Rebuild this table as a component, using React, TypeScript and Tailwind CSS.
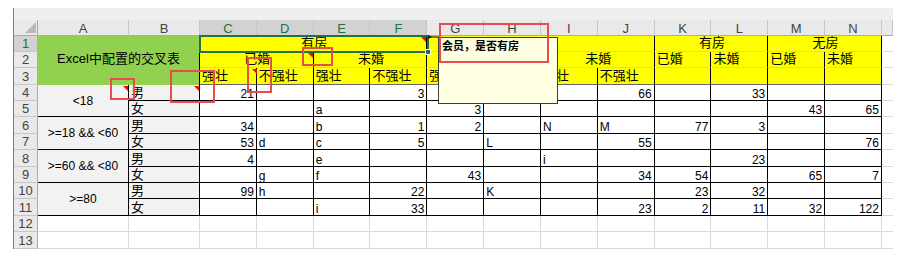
import * as React from 'react'

const letters = ['A', 'B', 'C', 'D', 'E', 'F', 'G', 'H', 'I', 'J', 'K', 'L', 'M', 'N']

// data for columns C..N, rows 4..11
const rows: string[][] = [
  ['21', '', '', '3', '', '', '', '66', '', '33', '', ''],
  ['', '', 'a', '', '3', '', '', '', '', '', '43', '65'],
  ['34', '', 'b', '1', '2', '', 'N', 'M', '77', '3', '', ''],
  ['53', 'd', 'c', '5', '', 'L', '', '55', '', '', '', '76'],
  ['4', '', 'e', '', '', '', 'i', '', '', '23', '', ''],
  ['', 'g', 'f', '', '43', '', '', '34', '54', '', '65', '7'],
  ['99', 'h', '', '22', '', 'K', '', '', '23', '32', '', ''],
  ['', '', 'i', '33', '', '', '', '23', '2', '11', '32', '122'],
]

const ages = ['<18', '>=18 && <60', '>=60 && <80', '>=80']

function ColHead({ label, selected }: { label: string; selected?: boolean }) {
  return (
    <div
      className={`flex items-center justify-center border-r border-b border-r-[#c6c6c6] border-b-[#ababab] pt-[2px] text-[13px] leading-[13px] ${
        selected ? 'bg-[#d2d2d2] text-[#217346]' : 'bg-[#e9e9e9] text-[#444]'
      }`}
    >
      {label}
    </div>
  )
}

function RowHead({ n, selected }: { n: number; selected?: boolean }) {
  return (
    <div
      className={`flex items-end justify-center border-r border-b border-r-[#ababab] border-b-[#c6c6c6] text-[13px] leading-[14px] ${
        selected ? 'bg-[#d2d2d2] text-[#217346]' : 'bg-[#e9e9e9] text-[#444]'
      }`}
    >
      {n}
    </div>
  )
}

function Yellow({
  children,
  span,
  center,
  last,
}: {
  children?: React.ReactNode
  span?: 2 | 4
  center?: boolean
  last?: boolean
}) {
  return (
    <div
      className={`flex items-end overflow-hidden whitespace-nowrap border-r border-b border-r-black bg-[#ffff00] pb-[1px] pl-[2px] text-[13px] leading-[14px] text-black ${
        last ? 'border-b-[#666]' : 'border-b-[#d4d4b4]'
      } ${center ? 'justify-center' : 'justify-start'} ${
        span === 4 ? 'col-span-4' : span === 2 ? 'col-span-2' : ''
      }`}
    >
      {children}
    </div>
  )
}

function Data({ v }: { v: string }) {
  const isNum = /^\d+$/.test(v)
  return (
    <div
      className={`flex items-end whitespace-nowrap border-r border-b border-black px-[2px] text-[12px] leading-[11px] text-black ${
        isNum ? 'justify-end' : 'justify-start'
      }`}
    >
      {v}
    </div>
  )
}

export default function App() {
  return (
    <div className="relative h-[258px] w-[898px] overflow-hidden bg-white font-['Liberation_Sans','Noto_Sans_CJK_SC',sans-serif]">
      <div className="ml-[13px] mt-[8px] flex h-[241px] w-[880px] flex-col border-l border-[#4a9d6a]">
        {/* top band */}
        <div className="h-[12px] bg-[#efefef]" />

        {/* sheet */}
        <div className="grid grid-cols-[24px_91px_71px_repeat(12,56.833px)_11px] grid-rows-[15.5px_repeat(13,16.4px)]">
          {/* column headers */}
          <div className="border-r border-b border-r-[#ababab] border-b-[#ababab] bg-[#e9e9e9]">
            <svg width="24" height="15" viewBox="0 0 24 15">
              <polygon points="22,2 22,13 11,13" fill="#b9b9b9" />
            </svg>
          </div>
          {letters.map((l, i) => (
            <ColHead key={l} label={l} selected={i >= 2 && i <= 5} />
          ))}
          <ColHead label="" />

          {/* row 1 */}
          <RowHead n={1} selected />
          <div className="col-span-2 row-span-3 flex items-center justify-center border-r border-black bg-[#92d050] pb-[2px] text-[13px] leading-[14px] text-black">
            Excel中配置的交叉表
          </div>
          <Yellow span={4} center>有房</Yellow>
          <Yellow span={4} center>无房</Yellow>
          <Yellow span={2} center>有房</Yellow>
          <Yellow span={2} center>无房</Yellow>
          <div className="border-b border-[#dadada]" />

          {/* row 2 */}
          <RowHead n={2} />
          <Yellow span={2} center>已婚</Yellow>
          <Yellow span={2} center>未婚</Yellow>
          <Yellow span={2} center>已婚</Yellow>
          <Yellow span={2} center>未婚</Yellow>
          <Yellow>已婚</Yellow>
          <Yellow>未婚</Yellow>
          <Yellow>已婚</Yellow>
          <Yellow>未婚</Yellow>
          <div className="border-b border-[#dadada]" />

          {/* row 3 */}
          <RowHead n={3} />
          <Yellow last>强壮</Yellow>
          <Yellow last>不强壮</Yellow>
          <Yellow last>强壮</Yellow>
          <Yellow last>不强壮</Yellow>
          <Yellow last>强壮</Yellow>
          <Yellow last>不强壮</Yellow>
          <Yellow last>强壮</Yellow>
          <Yellow last>不强壮</Yellow>
          <Yellow last />
          <Yellow last />
          <Yellow last />
          <Yellow last />
          <div className="border-b border-[#dadada]" />

          {/* rows 4..11 */}
          {rows.map((r, i) => (
            <React.Fragment key={i}>
              <RowHead n={i + 4} />
              {i % 2 === 0 && (
                <div className="row-span-2 flex items-center justify-center whitespace-nowrap border-r border-b border-black bg-[#f2f2f2] text-[12px] leading-[14px] text-black">
                  {ages[i / 2]}
                </div>
              )}
              <div className="flex items-end border-r border-b border-black bg-[#f2f2f2] pl-[2px] text-[13px] leading-[14px] text-black">
                {i % 2 === 0 ? '男' : '女'}
              </div>
              {r.map((v, j) => (
                <Data key={j} v={v} />
              ))}
              <div className="border-b border-[#dadada]" />
            </React.Fragment>
          ))}

          {/* rows 12, 13 */}
          {[12, 13].map((n) => (
            <React.Fragment key={n}>
              <RowHead n={n} />
              {letters.map((l) => (
                <div key={l} className="border-r border-b border-[#dadada]" />
              ))}
              <div className="border-b border-[#dadada]" />
            </React.Fragment>
          ))}
        </div>
      </div>

      {/* selection C1:F1 */}
      <div className="absolute left-[199px] top-[35px] h-[18px] w-[230px] border-2 border-[#217346]" />
      <div className="absolute left-[425px] top-[49px] h-[6px] w-[6px] border border-white bg-[#217346]" />

      {/* comment indicators */}
      <div className="absolute left-[421px] top-[37px] h-0 w-0 border-l-[5px] border-t-[5px] border-l-transparent border-t-[#ff0000]" />
      <div className="absolute left-[308px] top-[53px] h-0 w-0 border-l-[5px] border-t-[5px] border-l-transparent border-t-[#ff0000]" />
      <div className="absolute left-[252px] top-[69px] h-0 w-0 border-l-[5px] border-t-[5px] border-l-transparent border-t-[#ff0000]" />
      <div className="absolute left-[123px] top-[86px] h-0 w-0 border-l-[5px] border-t-[5px] border-l-transparent border-t-[#ff0000]" />
      <div className="absolute left-[194px] top-[86px] h-0 w-0 border-l-[5px] border-t-[5px] border-l-transparent border-t-[#ff0000]" />

      {/* comment connector + box */}
      <svg className="absolute left-[427px] top-[33px]" width="12" height="8" viewBox="0 0 12 8">
        <polygon points="1,2 5,4 1,6" fill="#000" />
        <line x1="4" y1="4" x2="12" y2="4" stroke="#000" strokeWidth="1" />
      </svg>
      <div className="absolute left-[438px] top-[37px] h-[67px] w-[120px] border border-[#3c3c3c] bg-[#ffffe1] px-[3px] pt-[2px] text-[11px] font-bold leading-[13px] text-black">
        会员，是否有房
      </div>

      {/* red annotation boxes */}
      <div className="absolute left-[110px] top-[78px] h-[22px] w-[25px] border-2 border-[#e84c4c]" />
      <div className="absolute left-[170px] top-[70px] h-[33px] w-[45px] border-2 border-[#e84c4c]" />
      <div className="absolute left-[247px] top-[57px] h-[36px] w-[25px] border-2 border-[#e84c4c]" />
      <div className="absolute left-[302px] top-[47px] h-[19px] w-[31px] border-2 border-[#e84c4c]" />
      <div className="absolute left-[439px] top-[23px] h-[40px] w-[110px] border-2 border-[#e84c4c]" />
    </div>
  )
}
